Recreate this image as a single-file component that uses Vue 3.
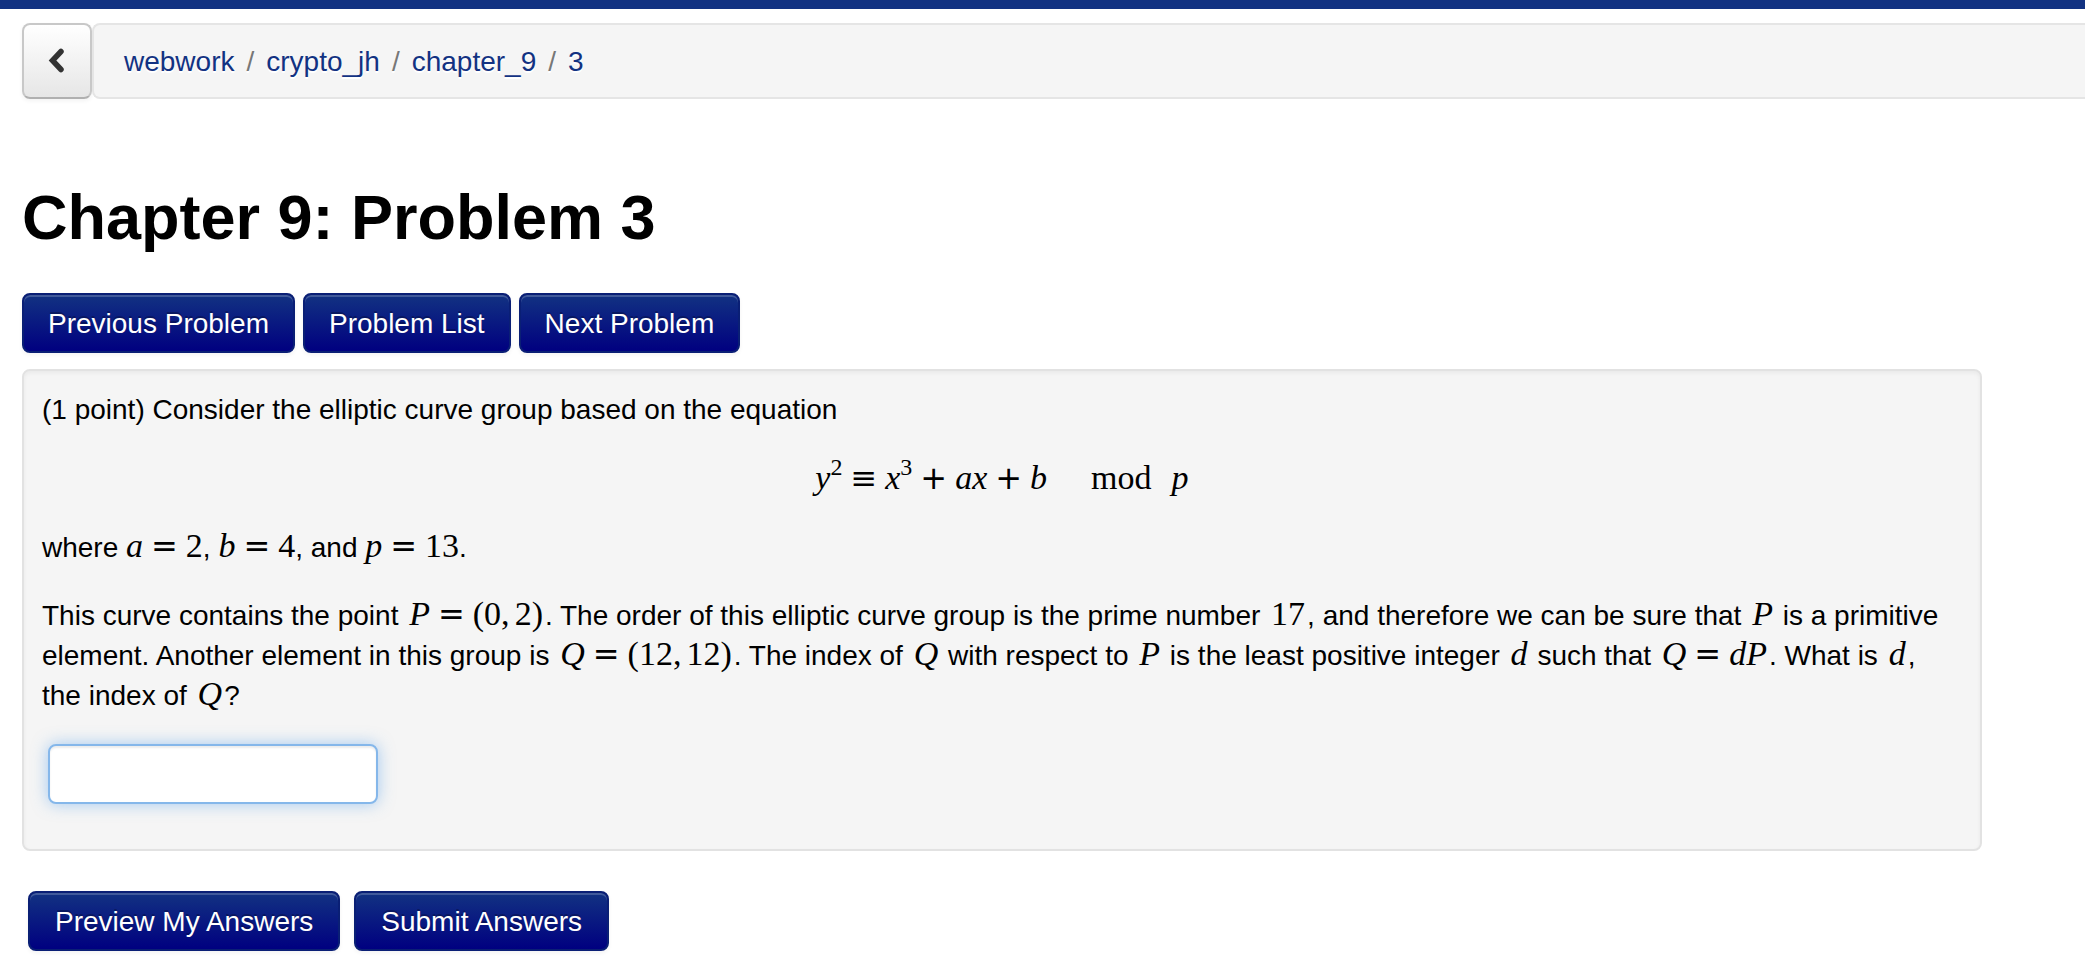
<script setup>
import { ref } from 'vue'

const answer = ref('')
const crumbs = ['webwork', 'crypto_jh', 'chapter_9', '3']
const navLinks = ['Previous Problem', 'Problem List', 'Next Problem']
</script>

<template>
  <div class="page">
    <div class="topbar"></div>
    <header class="nav-row">
      <button class="back" type="button" aria-label="Back">
        <svg width="20" height="26" viewBox="0 0 20 26" aria-hidden="true">
          <path d="M14 3.500 L5.500 12.500 L14 21.500" fill="none" stroke="#333" stroke-width="5.500" stroke-linecap="round" />
        </svg>
      </button>
      <nav class="crumbs" aria-label="Breadcrumb">
        <template v-for="(c, i) in crumbs" :key="c">
          <span v-if="i" class="slash">/</span>
          <a href="#">{{ c }}</a>
        </template>
      </nav>
    </header>

    <main class="content">
      <h1>Chapter 9: Problem 3</h1>
      <div class="links">
        <a v-for="l in navLinks" :key="l" class="btn" href="#">{{ l }}</a>
      </div>

      <form @submit.prevent>
        <section class="well">
          <p>(1 point) Consider the elliptic curve group based on the equation</p>
          <div class="display">
            <i>y</i><sup>2</sup><span class="op">≡</span><i>x</i><sup>3</sup><span class="op">+</span><i>ax</i><span class="op">+</span><i>b</i><span class="mod">mod</span><i>p</i>
          </div>
          <p>
            where <span class="m"><i>a</i><span class="op">=</span>2</span>,
            <span class="m"><i>b</i><span class="op">=</span>4</span>, and
            <span class="m"><i>p</i><span class="op">=</span>13</span>.
          </p>
          <p class="question">
            This curve contains the point <span class="m"><i>P</i><span class="op">=</span>(0,<span class="thin">2)</span></span>.
            The order of this elliptic curve group is the prime number <span class="m">17</span>, and therefore we can be sure that
            <span class="m"><i>P</i></span> is a primitive element. Another element in this group is
            <span class="m"><i>Q</i><span class="op">=</span>(12,<span class="thin">12)</span></span>.
            The index of <span class="m"><i>Q</i></span> with respect to <span class="m"><i>P</i></span> is the least positive integer
            <span class="m"><i>d</i></span> such that
            <span class="m"><i>Q</i><span class="op">=</span><i>dP</i></span>. What is <span class="m"><i>d</i></span>,
            <label for="answer">the index of <span class="m"><i>Q</i></span>?</label>
          </p>
          <input id="answer" v-model="answer" type="text" autocomplete="off" />
        </section>
        <div class="actions">
          <button class="btn" type="button">Preview My Answers</button>
          <button class="btn" type="submit">Submit Answers</button>
        </div>
      </form>
    </main>
  </div>
</template>

<style>
body {
  background: #fff;
}
</style>

<style scoped>
.page {
  font-family: "Liberation Sans", Arial, sans-serif;
  font-size: 28px;
  line-height: 40px;
  color: #000;
  overflow: hidden;
}
.topbar {
  height: 9px;
  background: #123282;
}
.nav-row {
  display: flex;
  margin: 14px 0 0 22px;
}
.back {
  box-sizing: border-box;
  width: 70px;
  display: flex;
  align-items: center;
  justify-content: center;
  padding: 0;
  border: 2px solid #c8c8c8;
  border-bottom-color: #b0b0b0;
  border-radius: 8px;
  background: linear-gradient(#fff, #e6e6e6);
  box-shadow: 0 2px 4px rgba(0, 0, 0, 0.05);
}
.crumbs {
  flex: 1;
  display: flex;
  gap: 12px;
  padding: 17px 30px 15px;
  border: 2px solid #e5e5e5;
  border-right: 0;
  border-radius: 8px 0 0 8px;
  background: #f5f5f5;
  text-shadow: 0 2px 0 #fff;
}
.crumbs a {
  color: #123282;
  text-decoration: none;
}
.slash {
  color: #777;
}
.content {
  padding-left: 22px;
}
h1 {
  margin: 78px 0 36px;
  font-size: 63px;
  line-height: 80px;
  font-weight: bold;
}
.links {
  display: flex;
  gap: 8px;
  margin-bottom: 16px;
}
.btn {
  box-sizing: border-box;
  padding: 9px 24px 7px;
  border: 2px solid #0a1f75;
  border-radius: 8px;
  background: linear-gradient(#123282, #000080);
  box-shadow: inset 0 2px 0 rgba(255, 255, 255, 0.2), 0 2px 4px rgba(0, 0, 0, 0.05);
  color: #fff;
  font: inherit;
  text-decoration: none;
  text-shadow: 0 -2px 0 rgba(0, 0, 0, 0.25);
}
.well {
  box-sizing: border-box;
  width: 95%;
  padding: 19px 18px 45px;
  border: 2px solid #e2e2e2;
  border-radius: 8px;
  background: #f5f5f5;
  box-shadow: inset 0 2px 4px rgba(0, 0, 0, 0.05);
}
.well p {
  margin: 0 0 28px;
}
.m,
.display {
  font-family: "Liberation Serif", "Times New Roman", serif;
  font-size: 34px;
  white-space: nowrap;
}
.m {
  line-height: 30px;
}
.question .m {
  margin: 0 2px 0 3px;
}
.display {
  margin: 0 0 30px;
  text-align: center;
}
.op {
  margin: 0 8px;
  font-family: "DejaVu Sans", sans-serif;
  font-size: 32px;
  line-height: 30px;
}
.mod {
  margin: 0 20px 0 44px;
}
.thin {
  margin-left: 5px;
}
sup {
  font-size: 24px;
  line-height: 0;
  vertical-align: 14px;
}
label {
  display: block;
}
input {
  display: block;
  box-sizing: border-box;
  width: 330px;
  height: 60px;
  margin-left: 6px;
  padding: 8px 12px;
  border: 2px solid #85b7ea;
  border-radius: 8px;
  outline: 0;
  background: #fff;
  box-shadow: inset 0 2px 2px rgba(0, 0, 0, 0.075), 0 0 16px rgba(82, 158, 236, 0.5);
  font: inherit;
}
.actions {
  display: flex;
  gap: 14px;
  margin: 40px 0 16px 6px;
}
.actions .btn {
  padding: 9px 25px 7px;
}
</style>
